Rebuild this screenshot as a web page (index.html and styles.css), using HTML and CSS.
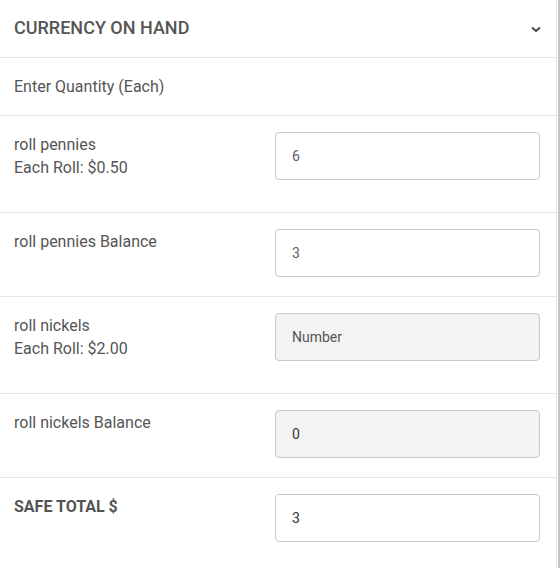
FILE: index.html
```html
<!DOCTYPE html>
<html lang="en">
<head>
  <meta charset="UTF-8">
  <meta name="viewport" content="width=device-width, initial-scale=1.0">
  <title>Currency on Hand</title>
  <link rel="stylesheet" href="styles.css">
</head>
<body>

  <div class="panel">
    <div class="panel-header">
      <span class="panel-title">CURRENCY ON HAND</span>
      <svg class="chevron" width="10" height="7" viewBox="0 0 10 7">
        <path d="M1 1.5 L5 5 L9 1.5" fill="none" stroke="#444" stroke-width="2"/>
      </svg>
    </div>

    <div class="intro">Enter Quantity (Each)</div>

    <div class="field-row tall">
      <div class="field-label">roll pennies<br>Each Roll: $0.50</div>
      <input class="field-input" type="number" value="6">
    </div>

    <div class="field-row">
      <div class="field-label">roll pennies Balance</div>
      <input class="field-input" type="number" value="3">
    </div>

    <div class="field-row tall">
      <div class="field-label">roll nickels<br>Each Roll: $2.00</div>
      <input class="field-input disabled" type="number" placeholder="Number" disabled>
    </div>

    <div class="field-row">
      <div class="field-label">roll nickels Balance</div>
      <input class="field-input disabled dark" type="number" value="0" disabled>
    </div>

    <div class="field-row last">
      <div class="field-label strong">SAFE TOTAL $</div>
      <input class="field-input dark" type="number" value="3">
    </div>
  </div>

</body>
</html>
```

FILE: styles.css
```css
html, body {
  margin: 0;
  padding: 0;
  height: 100%;
  overflow: hidden;
}

body {
  font-family: Roboto, 'Liberation Sans', sans-serif;
  background: #fff;
  color: #555;
  border-right: 2px solid #c4c4c4;
  box-sizing: border-box;
  width: 560px;
}

.panel {
  width: 557px;
  border-right: 1px solid #e6e6e6;
  min-height: 100%;
  box-sizing: border-box;
}

.panel-header {
  display: flex;
  align-items: center;
  justify-content: space-between;
  height: 57px;
  padding: 0 15px 0 14px;
  border-bottom: 1px solid #e6e6e6;
}

.panel-title {
  font-size: 18px;
  font-weight: 500;
  color: #555;
  padding-bottom: 2px;
}

.chevron {
  margin-top: 1px;
}

.intro {
  font-size: 16px;
  height: 57px;
  line-height: 58px;
  padding: 0 14px;
  border-bottom: 1px solid #e6e6e6;
}

.field-row {
  display: flex;
  align-items: flex-start;
  padding: 16px 16px 19px 14px;
  border-bottom: 1px solid #e6e6e6;
}

.field-row.tall {
  padding-bottom: 32px;
}

.field-row.last {
  border-bottom: none;
}

.field-label {
  flex: 1;
  font-size: 16px;
  line-height: 23px;
  padding-top: 1px;
}

.field-label.strong {
  font-weight: bold;
}

.field-input {
  width: 265px;
  height: 48px;
  box-sizing: border-box;
  border: 1px solid #c8c8c8;
  border-radius: 4px;
  padding: 0 16px;
  font-family: Roboto, 'Liberation Sans', sans-serif;
  font-size: 14px;
  color: #5a5f6e;
  background: #fff;
  outline: none;
  -moz-appearance: textfield;
}

.field-input::-webkit-outer-spin-button,
.field-input::-webkit-inner-spin-button {
  -webkit-appearance: none;
  margin: 0;
}

.field-input.disabled {
  background: #f3f3f3;
}

.field-input.dark {
  color: #333;
}

.field-input::placeholder {
  color: #555;
  opacity: 1;
}
```
